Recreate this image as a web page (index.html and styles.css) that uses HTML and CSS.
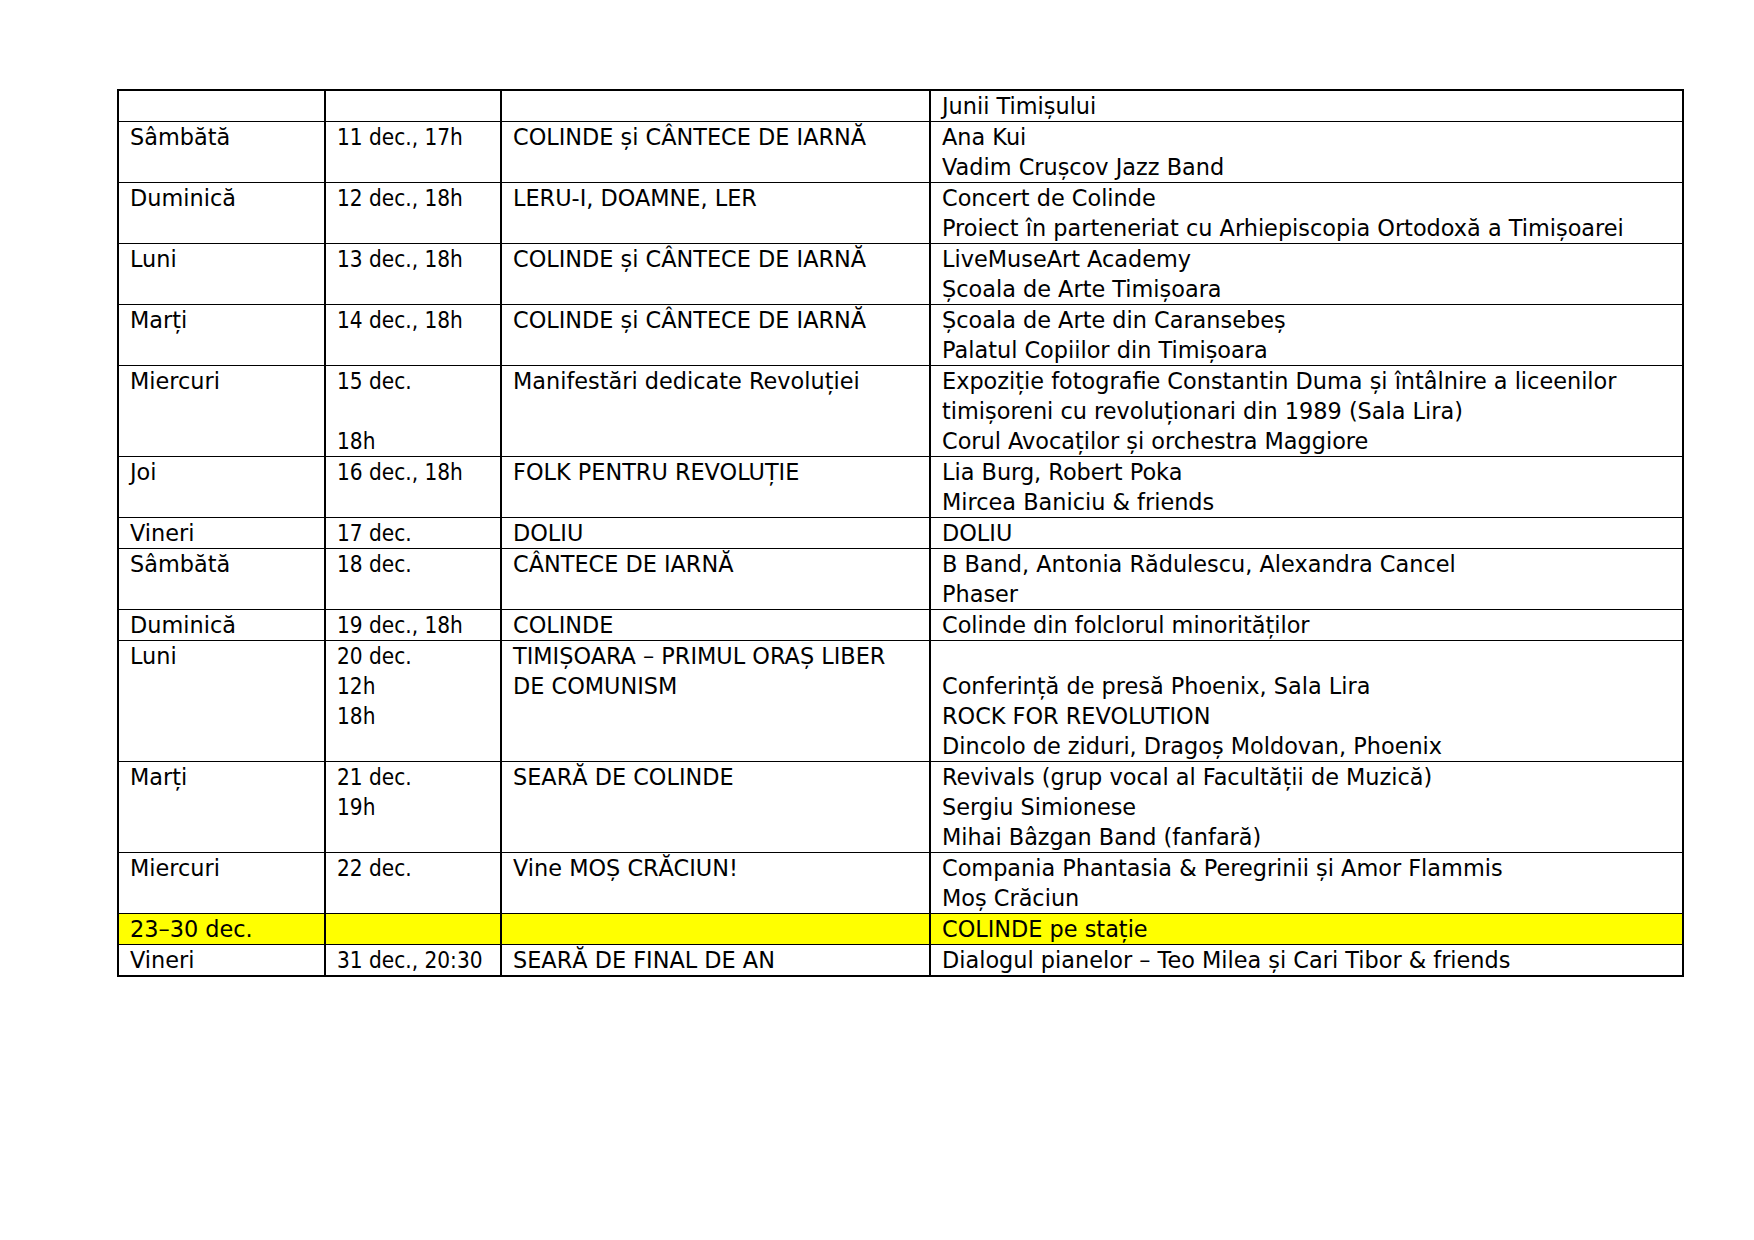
FILE: index.html
```html
<!DOCTYPE html>
<html lang="ro">
<head>
<meta charset="utf-8">
<title>Program</title>
<link rel="stylesheet" href="styles.css">
</head>
<body>
<table class="prog">
<colgroup><col class="c1"><col class="c2"><col class="c3"><col class="c4"></colgroup>
<tr><td><div class="t"></div></td><td class="d"><div class="t"></div></td><td><div class="t"></div></td><td><div class="t">Junii Timișului</div></td></tr>
<tr><td><div class="t">Sâmbătă</div></td><td class="d"><div class="t">11 dec., 17h</div></td><td><div class="t">COLINDE și CÂNTECE DE IARNĂ</div></td><td><div class="t">Ana Kui<br>Vadim Crușcov Jazz Band</div></td></tr>
<tr><td><div class="t">Duminică</div></td><td class="d"><div class="t">12 dec., 18h</div></td><td><div class="t">LERU-I, DOAMNE, LER</div></td><td><div class="t">Concert de Colinde<br>Proiect în parteneriat cu Arhiepiscopia Ortodoxă a Timișoarei</div></td></tr>
<tr><td><div class="t">Luni</div></td><td class="d"><div class="t">13 dec., 18h</div></td><td><div class="t">COLINDE și CÂNTECE DE IARNĂ</div></td><td><div class="t">LiveMuseArt Academy<br>Școala de Arte Timișoara</div></td></tr>
<tr><td><div class="t">Marți</div></td><td class="d"><div class="t">14 dec., 18h</div></td><td><div class="t">COLINDE și CÂNTECE DE IARNĂ</div></td><td><div class="t">Școala de Arte din Caransebeș<br>Palatul Copiilor din Timișoara</div></td></tr>
<tr><td><div class="t">Miercuri</div></td><td class="d"><div class="t">15 dec.<br><br>18h</div></td><td><div class="t">Manifestări dedicate Revoluției</div></td><td><div class="t">Expoziție fotografie Constantin Duma și întâlnire a liceenilor<br>timișoreni cu revoluționari din 1989 (Sala Lira)<br>Corul Avocaților și orchestra Maggiore</div></td></tr>
<tr><td><div class="t">Joi</div></td><td class="d"><div class="t">16 dec., 18h</div></td><td><div class="t">FOLK PENTRU REVOLUȚIE</div></td><td><div class="t">Lia Burg, Robert Poka<br>Mircea Baniciu &amp; friends</div></td></tr>
<tr><td><div class="t">Vineri</div></td><td class="d"><div class="t">17 dec.</div></td><td><div class="t">DOLIU</div></td><td><div class="t">DOLIU</div></td></tr>
<tr><td><div class="t">Sâmbătă</div></td><td class="d"><div class="t">18 dec.</div></td><td><div class="t">CÂNTECE DE IARNĂ</div></td><td><div class="t">B Band, Antonia Rădulescu, Alexandra Cancel<br>Phaser</div></td></tr>
<tr><td><div class="t">Duminică</div></td><td class="d"><div class="t">19 dec., 18h</div></td><td><div class="t">COLINDE</div></td><td><div class="t">Colinde din folclorul minorităților</div></td></tr>
<tr><td><div class="t">Luni</div></td><td class="d"><div class="t">20 dec.<br>12h<br>18h</div></td><td><div class="t">TIMIȘOARA – PRIMUL ORAȘ LIBER<br>DE COMUNISM</div></td><td><div class="t"><br>Conferință de presă Phoenix, Sala Lira<br>ROCK FOR REVOLUTION<br>Dincolo de ziduri, Dragoș Moldovan, Phoenix</div></td></tr>
<tr><td><div class="t">Marți</div></td><td class="d"><div class="t">21 dec.<br>19h</div></td><td><div class="t">SEARĂ DE COLINDE</div></td><td><div class="t">Revivals (grup vocal al Facultății de Muzică)<br>Sergiu Simionese<br>Mihai Bâzgan Band (fanfară)</div></td></tr>
<tr><td><div class="t">Miercuri</div></td><td class="d"><div class="t">22 dec.</div></td><td><div class="t">Vine MOȘ CRĂCIUN!</div></td><td><div class="t">Compania Phantasia &amp; Peregrinii și Amor Flammis<br>Moș Crăciun</div></td></tr>
<tr class="hl"><td><div class="t">23–30 dec.</div></td><td class="d"><div class="t"></div></td><td><div class="t"></div></td><td><div class="t">COLINDE pe stație</div></td></tr>
<tr class="last"><td><div class="t">Vineri</div></td><td class="d"><div class="t">31 dec., 20:30</div></td><td><div class="t">SEARĂ DE FINAL DE AN</div></td><td><div class="t">Dialogul pianelor – Teo Milea și Cari Tibor &amp; friends</div></td></tr>
</table>
</body>
</html>
```
FILE: styles.css
```css
html, body {
  margin: 0;
  padding: 0;
  background: #ffffff;
}
body {
  padding: 89px 0 0 117px;
  font-family: "DejaVu Sans", sans-serif;
  font-size: 22.4px;
  color: #000;
}
.prog {
  border-collapse: separate;
  border-spacing: 0;
  table-layout: fixed;
  width: 1567px;
  border-left: 2px solid #000;
  border-top: 2px solid #000;
}
.c1 { width: 207px; }
.c2 { width: 176px; }
.c3 { width: 429px; }
.c4 { width: 753px; }
.prog td {
  padding: 0 0 0 11px;
  vertical-align: top;
  border-right: 2px solid #000;
  border-bottom: 1px solid #000;
  white-space: nowrap;
}
.prog td.d {
  font-family: "DejaVu Sans Condensed", "DejaVu Sans", sans-serif;
}
.prog .last td {
  border-bottom: 2px solid #000;
}
.t {
  line-height: 30px;
  min-height: 30px;
}
.hl td {
  background: #ffff00;
}
```
